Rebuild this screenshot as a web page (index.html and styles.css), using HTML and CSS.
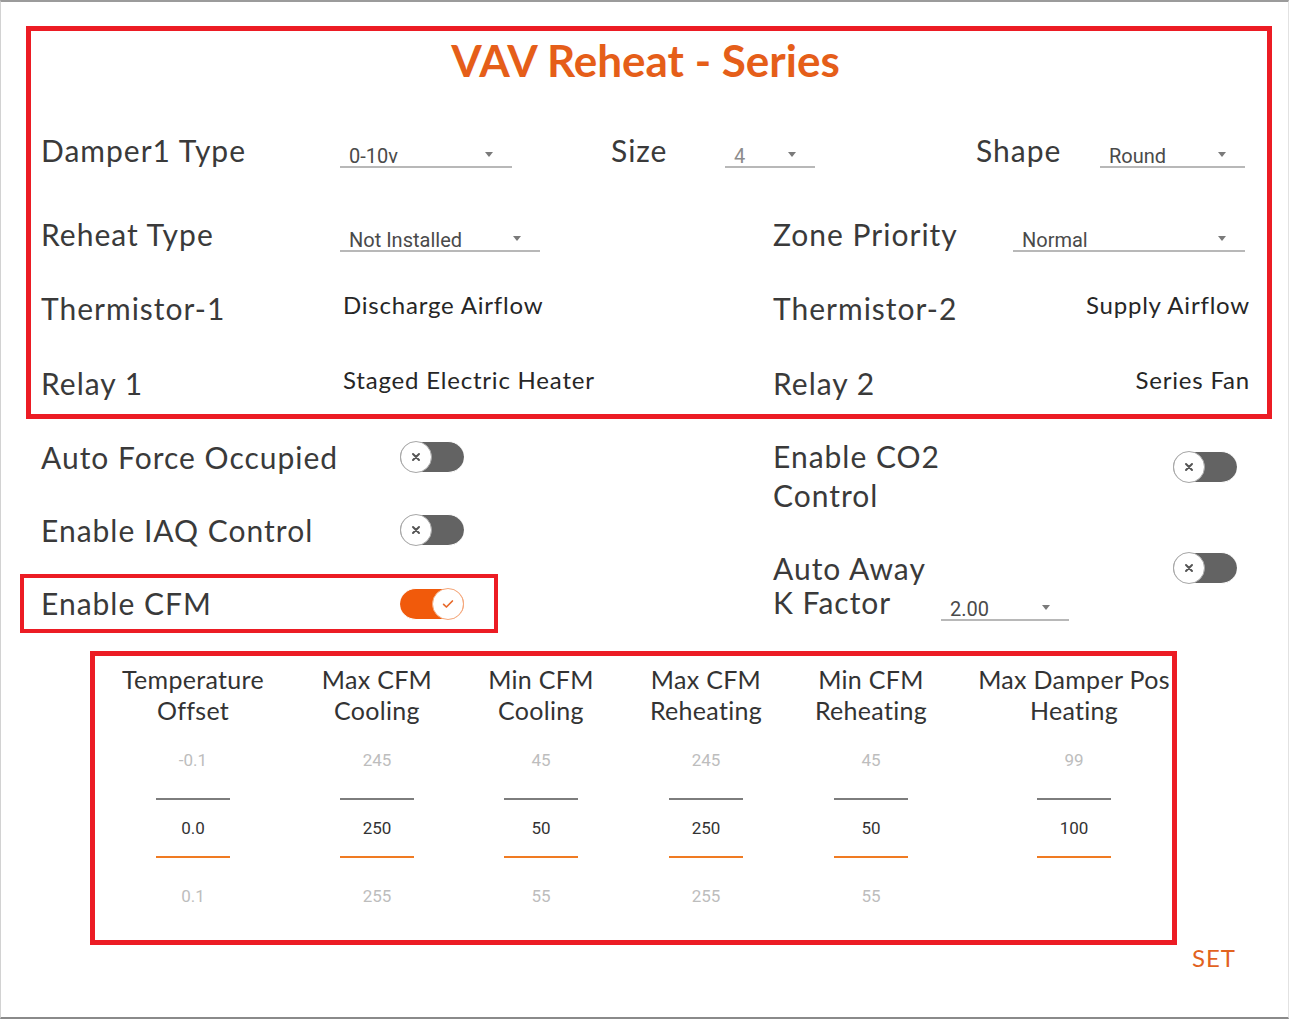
FILE: index.html
```html
<!DOCTYPE html>
<html>
<head>
<meta charset="utf-8">
<link rel="stylesheet" href="styles.css">
</head>
<body>
<div class="frame">
  <section class="box box-top">
    <h1 class="title">VAV Reheat - Series</h1>
    <div class="row row1">
      <div class="label">Damper1 Type</div>
      <div class="select"><span class="sel-text">0-10v</span><span class="arrow"></span></div>
      <div></div>
      <div class="label">Size</div>
      <div class="select"><span class="sel-text dim">4</span><span class="arrow"></span></div>
      <div></div>
      <div class="label">Shape</div>
      <div class="select"><span class="sel-text">Round</span><span class="arrow"></span></div>
    </div>
    <div class="row row2">
      <div class="label">Reheat Type</div>
      <div class="select"><span class="sel-text">Not Installed</span><span class="arrow"></span></div>
      <div></div>
      <div class="label">Zone Priority</div>
      <div class="select"><span class="sel-text">Normal</span><span class="arrow"></span></div>
    </div>
    <div class="row row3">
      <div class="label">Thermistor-1</div>
      <div class="value">Discharge Airflow</div>
      <div class="label">Thermistor-2</div>
      <div class="value right">Supply Airflow</div>
    </div>
    <div class="row row4">
      <div class="label">Relay 1</div>
      <div class="value">Staged Electric Heater</div>
      <div class="label">Relay 2</div>
      <div class="value right">Series Fan</div>
    </div>
  </section>

  <div class="mid">
    <div class="mid-left">
      <div class="trow">
        <div class="label">Auto Force Occupied</div>
        <div class="toggle"><span class="thumb"><svg viewBox="0 0 12 12" width="12" height="12"><path d="M3 3l6 6M9 3l-6 6" stroke="#555" stroke-width="2" stroke-linecap="round"/></svg></span></div>
      </div>
      <div class="trow trow2">
        <div class="label">Enable IAQ Control</div>
        <div class="toggle"><span class="thumb"><svg viewBox="0 0 12 12" width="12" height="12"><path d="M3 3l6 6M9 3l-6 6" stroke="#555" stroke-width="2" stroke-linecap="round"/></svg></span></div>
      </div>
      <div class="box box-cfm">
        <div class="label">Enable CFM</div>
        <div class="toggle on"><span class="thumb"><svg viewBox="0 0 16 16" width="16" height="16"><path d="M3.6 8.4l2.8 2.6 6-6" stroke="#e8692a" stroke-width="1.7" fill="none" stroke-linecap="round" stroke-linejoin="round"/></svg></span></div>
      </div>
    </div>
    <div class="mid-right">
      <div class="rowA">
        <div class="label two">Enable CO2<br>Control</div>
        <div class="toggle tA"><span class="thumb"><svg viewBox="0 0 12 12" width="12" height="12"><path d="M3 3l6 6M9 3l-6 6" stroke="#555" stroke-width="2" stroke-linecap="round"/></svg></span></div>
      </div>
      <div class="rowB">
        <div class="label lb1">Auto Away</div>
        <div class="toggle tB"><span class="thumb"><svg viewBox="0 0 12 12" width="12" height="12"><path d="M3 3l6 6M9 3l-6 6" stroke="#555" stroke-width="2" stroke-linecap="round"/></svg></span></div>
        <div class="label lb2">K Factor</div>
        <div class="select kf"><span class="sel-text">2.00</span><span class="arrow"></span></div>
      </div>
    </div>
  </div>

  <section class="box box-pick">
    <div class="picker">
      <div class="phead">Temperature<br>Offset</div>
      <div class="pv faint">-0.1</div>
      <div class="pline"></div>
      <div class="psel">0.0</div>
      <div class="pline orange"></div>
      <div class="pv faint low">0.1</div>
    </div>
    <div class="picker">
      <div class="phead">Max CFM<br>Cooling</div>
      <div class="pv faint">245</div>
      <div class="pline"></div>
      <div class="psel">250</div>
      <div class="pline orange"></div>
      <div class="pv faint low">255</div>
    </div>
    <div class="picker">
      <div class="phead">Min CFM<br>Cooling</div>
      <div class="pv faint">45</div>
      <div class="pline"></div>
      <div class="psel">50</div>
      <div class="pline orange"></div>
      <div class="pv faint low">55</div>
    </div>
    <div class="picker">
      <div class="phead">Max CFM<br>Reheating</div>
      <div class="pv faint">245</div>
      <div class="pline"></div>
      <div class="psel">250</div>
      <div class="pline orange"></div>
      <div class="pv faint low">255</div>
    </div>
    <div class="picker">
      <div class="phead">Min CFM<br>Reheating</div>
      <div class="pv faint">45</div>
      <div class="pline"></div>
      <div class="psel">50</div>
      <div class="pline orange"></div>
      <div class="pv faint low">55</div>
    </div>
    <div class="picker">
      <div class="phead">Max Damper Pos<br>Heating</div>
      <div class="pv faint">99</div>
      <div class="pline"></div>
      <div class="psel">100</div>
      <div class="pline orange"></div>
    </div>
  </section>

  <div class="actions"><span class="set">SET</span></div>
</div>
</body>
</html>
```

FILE: styles.css
```css
* { box-sizing: border-box; }
html, body { margin: 0; padding: 0; background: #ffffff; }
body { font-family: Lato, "Liberation Sans", sans-serif; color: #3a3a3a; }

.frame {
  width: 1289px;
  height: 1019px;
  border-top: 2px solid #9b9b9b;
  border-bottom: 2px solid #8a8a8a;
  border-left: 1px solid #d2d2d2;
  border-right: 1px solid #e2e2e2;
  padding-top: 24px;
  overflow: hidden;
}

.box { border: 5px solid #ec1c24; }

.box-top {
  margin-left: 25px;
  width: 1246px;
  padding: 0 17px 6px 10px;
}

.title {
  margin: 0;
  text-align: center;
  font-weight: 700;
  font-size: 44px;
  line-height: 58px;
  color: #e55e19;
  padding-left: 0;
}

.label {
  font-size: 30px;
  line-height: 50px;
  letter-spacing: 1px;
  color: #3a3a3a;
  white-space: nowrap;
}

.row { display: grid; height: 50px; align-items: start; }
.row1 { margin-top: 36px; grid-template-columns: 299px 172px 99px 114px 90px 161px 124px 145px; }
.row2 { margin-top: 34px; grid-template-columns: 299px 200px 233px 240px 232px; }
.row3 { margin-top: 24px; grid-template-columns: 299px 433px 1fr auto; }
.row4 { margin-top: 25px; grid-template-columns: 299px 433px 1fr auto; }

.value {
  font-size: 24px;
  line-height: 44px;
  letter-spacing: 0.8px;
  color: #262626;
  white-space: nowrap;
  padding-left: 3px;
}
.value.right { text-align: right; }

.select {
  height: 43px;
  display: flex;
  align-items: flex-end;
  justify-content: space-between;
  padding: 0 19px 0 9px;
  border-bottom: 2px solid #b8b8b8;
}
.sel-text {
  font-family: Roboto, "Liberation Sans", sans-serif;
  font-size: 20px;
  line-height: 20px;
  color: #4a4a4a;
}
.sel-text.dim { color: #8c8c8c; }
.arrow {
  width: 0; height: 0;
  border-left: 4px solid transparent;
  border-right: 4px solid transparent;
  border-top: 5px solid #7a7a7a;
  margin-bottom: 9px;
}

/* toggles */
.toggle {
  width: 64px;
  height: 32px;
  border-radius: 16px;
  background: #636363;
  display: flex;
  align-items: center;
  justify-content: flex-start;
  padding: 0;
  border-top: 1px solid #fff;
  border-bottom: 1px solid #fff;
}
.thumb {
  width: 32px;
  height: 32px;
  border-radius: 50%;
  background: #fff;
  border: 1.5px solid #a8a8a8;
  display: flex;
  align-items: center;
  justify-content: center;
}
.toggle.on { background: #f15a0b; justify-content: flex-end; }
.toggle.on .thumb { border-color: #f4a77a; }

.mid {
  display: flex;
  margin-top: 18px;
  margin-left: 19px;
}
.mid-left { width: 478px; }
.mid-right { margin-left: 275px; width: 464px; }

.trow {
  display: grid;
  grid-template-columns: 359px 64px;
  align-items: center;
  height: 40px;
  padding-left: 21px;
}
.trow .label { line-height: 40px; }
.trow2 { margin-top: 33px; }

.box-cfm {
  border-width: 4px;
  margin-top: 24px;
  height: 59px;
  display: grid;
  grid-template-columns: 359px 64px;
  align-items: center;
  padding-left: 17px;
}
.box-cfm .label { line-height: 51px; }

.rowA {
  display: grid;
  grid-template-columns: 400px 64px;
  align-items: start;
}
.label.two { line-height: 39px; }
.tA { margin-top: 14px; }

.rowB {
  margin-top: 36px;
  display: grid;
  grid-template-columns: 168px 128px 104px 64px;
  grid-template-rows: 34px 34px;
}
.lb1 { grid-column: 1 / 4; grid-row: 1; line-height: 34px; }
.tB { grid-column: 4; grid-row: 1; align-self: center; }
.lb2 { grid-column: 1; grid-row: 2; line-height: 34px; }
.kf { grid-column: 2; grid-row: 2; height: 36px; }

/* pickers */
.box-pick {
  margin-top: 18px;
  margin-left: 89px;
  width: 1087px;
  padding: 8px 0 34px 3px;
  display: grid;
  grid-template-columns: 190px 118px 150px 120px 150px 196px;
  column-gap: 30px;
}
.picker { display: flex; flex-direction: column; align-items: center; }
.phead {
  font-size: 25px;
  line-height: 31px;
  letter-spacing: 0.3px;
  text-align: center;
  color: #333;
  white-space: nowrap;
}
.pv {
  font-family: Roboto, "Liberation Sans", sans-serif;
  font-size: 17px;
  line-height: 20px;
  margin-top: 24px;
}
.pv.low { margin-top: 28px; }
.faint { color: #bdbdbd; }
.pline {
  width: 74px;
  height: 2px;
  background: #7d7d7d;
  margin-top: 28px;
}
.pline.orange { background: #f07b22; margin-top: 0; }
.psel {
  font-family: Roboto, "Liberation Sans", sans-serif;
  font-size: 17px;
  line-height: 56px;
  color: #333;
}

.actions {
  display: flex;
  justify-content: flex-end;
  padding-right: 52px;
}
.set {
  font-size: 24px;
  line-height: 26px;
  color: #e2631f;
  letter-spacing: 1px;
}
```
